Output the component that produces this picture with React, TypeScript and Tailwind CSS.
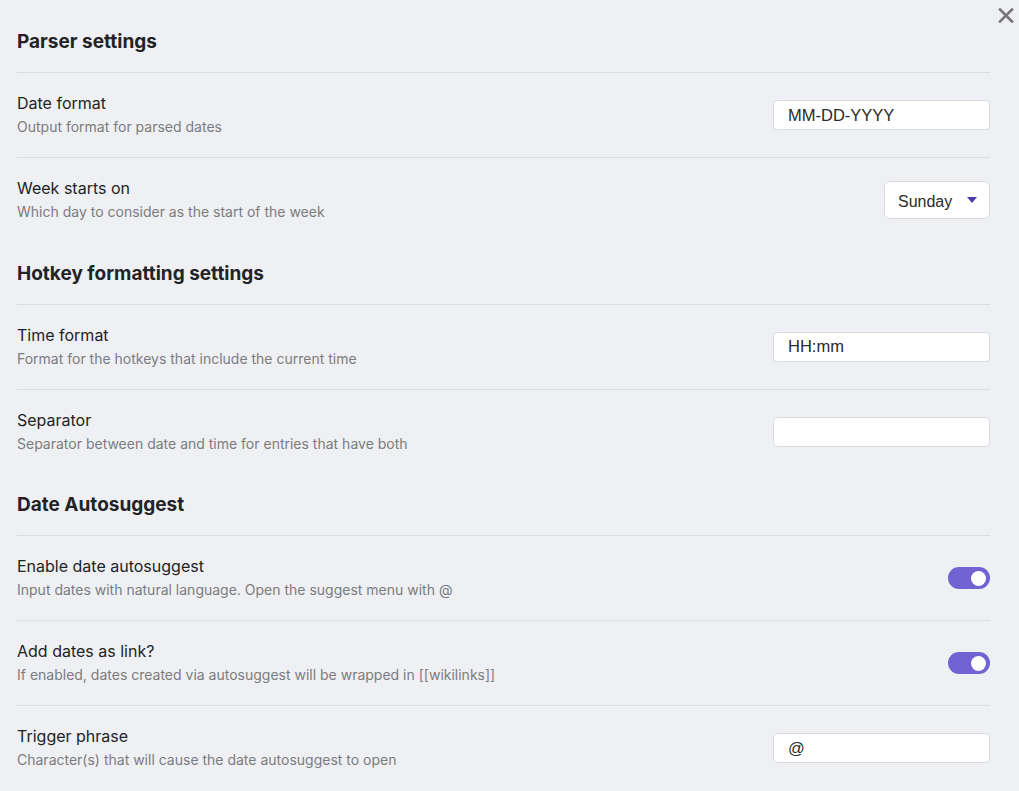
type Control =
  | { kind: 'text'; value: string }
  | { kind: 'select'; value: string }
  | { kind: 'toggle'; on: boolean };

interface Setting {
  name: string;
  desc: string;
  control: Control;
}

interface Section {
  title: string;
  items: Setting[];
}

const sections: Section[] = [
  {
    title: 'Parser settings',
    items: [
      { name: 'Date format', desc: 'Output format for parsed dates', control: { kind: 'text', value: 'MM-DD-YYYY' } },
      { name: 'Week starts on', desc: 'Which day to consider as the start of the week', control: { kind: 'select', value: 'Sunday' } },
    ],
  },
  {
    title: 'Hotkey formatting settings',
    items: [
      { name: 'Time format', desc: 'Format for the hotkeys that include the current time', control: { kind: 'text', value: 'HH:mm' } },
      { name: 'Separator', desc: 'Separator between date and time for entries that have both', control: { kind: 'text', value: '' } },
    ],
  },
  {
    title: 'Date Autosuggest',
    items: [
      { name: 'Enable date autosuggest', desc: 'Input dates with natural language. Open the suggest menu with @', control: { kind: 'toggle', on: true } },
      { name: 'Add dates as link?', desc: 'If enabled, dates created via autosuggest will be wrapped in [[wikilinks]]', control: { kind: 'toggle', on: true } },
      { name: 'Trigger phrase', desc: 'Character(s) that will cause the date autosuggest to open', control: { kind: 'text', value: '@' } },
    ],
  },
];

function SettingControl({ control }: { control: Control }) {
  if (control.kind === 'text') {
    return (
      <div className="w-[217px] h-[30px] rounded-[4px] border border-[#dadbdd] bg-white pl-[14px] flex items-center text-[16.5px] text-[#2a2a2a] font-['Liberation_Sans',Arial,sans-serif]">
        {control.value}
      </div>
    );
  }
  if (control.kind === 'select') {
    return (
      <div className="h-[38px] w-[106px] rounded-[6px] border border-[#dadbdd] bg-white pl-[13px] pr-[12px] flex items-center justify-between text-[16px] text-[#2a2a2a] font-['Liberation_Sans',Arial,sans-serif]">
        <span className="pt-[3px]">{control.value}</span>
        <svg width="10" height="6" viewBox="0 0 10 6">
          <path d="M0 0 L10 0 L5 6 Z" fill="#4b3aa8" />
        </svg>
      </div>
    );
  }
  return (
    <div className={`w-[42px] h-[22px] rounded-full flex items-center px-[4px] ${control.on ? 'bg-[#7262d3] justify-end' : 'bg-[#c8c8cc] justify-start'}`}>
      <div className="w-[15px] h-[15px] rounded-full bg-white" />
    </div>
  );
}

export default function App() {
  return (
    <div className="relative min-h-screen bg-[#eff0f3] font-['Inter','Noto_Sans',sans-serif] pt-[10.5px] pl-[17px] pr-[29px]">
      <button className="absolute top-[8px] right-[5px]">
        <svg width="16" height="15" viewBox="0 0 16 15">
          <path d="M2 1.5 L14 13.5 M14 1.5 L2 13.5" stroke="#787878" strokeWidth="2.6" strokeLinecap="square" />
        </svg>
      </button>
      {sections.map((section) => (
        <div key={section.title}>
          <div className="pt-[19.5px] pb-[18px] leading-[24px] text-[19px] font-bold text-[#222326]">{section.title}</div>
          {section.items.map((item) => (
            <div key={item.name} className="border-t border-[#dcdde0] py-[18px] flex items-center justify-between">
              <div>
                <div className="text-[16px] leading-[24px] text-[#222326]">{item.name}</div>
                <div className="text-[14px] leading-[24px] text-[#7b7c80]">{item.desc}</div>
              </div>
              <SettingControl control={item.control} />
            </div>
          ))}
        </div>
      ))}
    </div>
  );
}
